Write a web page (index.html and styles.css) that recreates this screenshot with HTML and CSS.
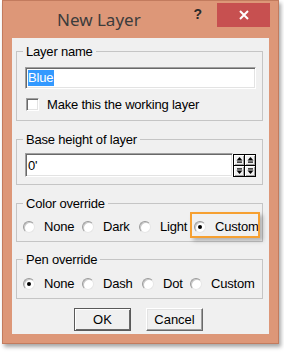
FILE: index.html
```html
<!DOCTYPE html>
<html>
<head>
<meta charset="utf-8">
<link rel="stylesheet" href="styles.css">
</head>
<body>
<div class="window">
  <div class="titlebar">
    <span class="title">New Layer</span>
    <span class="help">?</span>
    <span class="close"><svg width="10" height="10" viewBox="0 0 10 10"><path d="M1 1L9 9M9 1L1 9" stroke="#fff" stroke-width="2"/></svg></span>
  </div>
  <div class="client">
    <fieldset class="group g1">
      <legend>Layer name</legend>
      <div class="textbox"><span class="sel">Blue</span></div>
      <div class="check"><span class="box"></span><span>Make this the working layer</span></div>
    </fieldset>
    <fieldset class="group g2">
      <legend>Base height of layer</legend>
      <div class="spinrow">
        <div class="textbox tall">0'</div>
        <div class="spin">
          <span class="cell"><svg width="7" height="6" viewBox="0 0 7 6"><path d="M3.5 0L6.5 3.5H0.5Z" fill="#000"/><rect x="1" y="4.5" width="5" height="1.2" fill="#000"/></svg></span>
          <span class="cell"><svg width="7" height="6" viewBox="0 0 7 6"><path d="M3.5 0L6.5 3.5H0.5Z" fill="#000"/><rect x="1" y="4.5" width="5" height="1.2" fill="#000"/></svg></span>
          <span class="cell"><svg width="7" height="6" viewBox="0 0 7 6"><rect x="1" y="0.3" width="5" height="1.2" fill="#000"/><path d="M3.5 6L6.5 2.5H0.5Z" fill="#000"/></svg></span>
          <span class="cell"><svg width="7" height="6" viewBox="0 0 7 6"><rect x="1" y="0.3" width="5" height="1.2" fill="#000"/><path d="M3.5 6L6.5 2.5H0.5Z" fill="#000"/></svg></span>
        </div>
      </div>
    </fieldset>
    <fieldset class="group g3">
      <legend>Color override</legend>
      <div class="radios">
        <span class="radio"><i></i>None</span>
        <span class="radio"><i></i>Dark</span>
        <span class="radio"><i></i>Light</span>
        <span class="radio checked hl"><i></i>Custom</span>
      </div>
    </fieldset>
    <fieldset class="group g4">
      <legend>Pen override</legend>
      <div class="radios">
        <span class="radio checked"><i></i>None</span>
        <span class="radio"><i></i>Dash</span>
        <span class="radio"><i></i>Dot</span>
        <span class="radio"><i></i>Custom</span>
      </div>
    </fieldset>
    <div class="buttons">
      <span class="btn default">OK</span>
      <span class="btn">Cancel</span>
    </div>
  </div>
</div>
</body>
</html>
```
FILE: styles.css
```css
html, body {
  margin: 0;
  padding: 0;
  background: #ffffff;
}
body {
  width: 284px;
  height: 352px;
  font-family: "Liberation Sans", Arial, sans-serif;
  font-size: 13px;
  letter-spacing: -0.2px;
  color: #000;
}
.window {
  margin-left: 2px;
  width: 277px;
  height: 344px;
  box-sizing: border-box;
  background: #dd9778;
  border: 1px solid #c27b5e;
  padding: 0 9px 9px 9px;
  display: flex;
  flex-direction: column;
  box-shadow: 2px 3px 4px rgba(0, 0, 0, 0.35);
}
.titlebar {
  height: 37px;
  display: flex;
  align-items: flex-start;
}
.title {
  font-family: "Noto Sans", "Liberation Sans", sans-serif;
  font-size: 17px;
  letter-spacing: 0;
  line-height: 20px;
  color: #3c3c3c;
  margin-left: 45px;
  padding-top: 9px;
  flex: 1;
}
.help {
  font-weight: bold;
  font-size: 14px;
  line-height: 14px;
  padding-top: 6px;
  color: #2a2a2a;
  margin-right: 15px;
  letter-spacing: 0;
}
.close {
  width: 53px;
  height: 24px;
  margin-top: 2px;
  margin-right: -1px;
  background: #c75050;
  display: flex;
  align-items: center;
  justify-content: center;
}
.client {
  flex: 1;
  background: #f0f0f0;
  padding: 0 6px 3px 4px;
  display: flex;
  flex-direction: column;
}
.group {
  margin: 0;
  min-width: 0;
  border: 1px solid #c5c5c5;
  padding: 0 6px 7px 6px;
}
.group legend {
  padding: 0 3px;
  line-height: 15px;
}
.g1 { margin-top: 6px; padding-top: 8px; padding-bottom: 8px; }
.g2 { margin-top: 11px; padding-top: 6px; }
.g3 { margin-top: 11px; padding-top: 8px; }
.g4 { margin-top: 10px; padding-top: 9px; }

.textbox {
  margin-left: 2px;
  height: 22px;
  box-sizing: border-box;
  background: #fff;
  border-top: 1px solid #a0a0a0;
  border-left: 1px solid #a0a0a0;
  border-right: 1px solid #fff;
  border-bottom: 1px solid #fff;
  box-shadow: inset 1px 1px 0 #696969, inset -1px -1px 0 #e3e3e3;
  padding: 2px 0 0 2px;
  line-height: 16px;
}
.sel {
  display: inline-block;
  background: #3399ff;
  color: #fff;
  line-height: 16px;
  padding: 0 1px 0 0;
}
.check {
  display: flex;
  align-items: center;
  height: 15px;
  margin-top: 8px;
  margin-left: 3px;
}
.box {
  width: 13px;
  height: 13px;
  box-sizing: border-box;
  background: #fff;
  border-top: 1px solid #a0a0a0;
  border-left: 1px solid #a0a0a0;
  border-right: 1px solid #fff;
  border-bottom: 1px solid #fff;
  box-shadow: inset 1px 1px 0 #696969, inset -1px -1px 0 #e3e3e3;
  margin-right: 8px;
}
.spinrow {
  display: flex;
  height: 24px;
}
.spinrow .textbox {
  flex: 1;
  height: 24px;
  padding-top: 4px;
}
.spin {
  width: 23px;
  height: 23px;
  margin-top: 1px;
  box-sizing: border-box;
  border: 1px solid #000;
  background: #000;
  display: grid;
  grid-template-columns: 1fr 1fr;
  grid-template-rows: 1fr 1fr;
  gap: 1px;
}
.cell {
  background: #f0f0f0;
  box-shadow: inset 1px 1px 0 #fff, inset -1px -1px 0 #a0a0a0;
  display: flex;
  align-items: center;
  justify-content: center;
}
.radios {
  display: grid;
  height: 15px;
  align-items: center;
  line-height: 15px;
}
.g3 .radios { grid-template-columns: 59px 57px 55px auto; }
.g4 .radios { grid-template-columns: 59px 60px 48px auto; }
.radio {
  display: flex;
  align-items: center;
  position: relative;
}
.radio i {
  width: 12px;
  height: 12px;
  box-sizing: border-box;
  border-radius: 50%;
  background: #fff;
  border: 1px solid;
  border-color: #9a9a9a #e6e6e6 #e6e6e6 #9a9a9a;
  box-shadow: inset 1px 1px 0 #c8c8c8;
  margin-right: 9px;
  display: flex;
  align-items: center;
  justify-content: center;
}
.radio.checked i::after {
  content: "";
  width: 4px;
  height: 4px;
  border-radius: 50%;
  background: #000;
}
.hl::after {
  content: "";
  position: absolute;
  left: -4px;
  top: -7px;
  width: 70px;
  height: 26px;
  box-sizing: border-box;
  border: 2px solid #f6a031;
  box-shadow: 3px 3px 4px rgba(0, 0, 0, 0.25);
}
.buttons {
  margin-top: 9px;
  display: flex;
  justify-content: center;
  gap: 15px;
  padding-right: 2px;
}
.btn {
  width: 57px;
  height: 23px;
  box-sizing: border-box;
  background: #f0f0f0;
  border: 1px solid;
  border-color: #fff #696969 #696969 #fff;
  box-shadow: inset -1px -1px 0 #a0a0a0, inset 1px 1px 0 #e3e3e3;
  display: flex;
  align-items: center;
  justify-content: center;
  letter-spacing: 0;
}
.btn.default {
  border-color: #5a5a5a;
  box-shadow: inset 1px 1px 0 #fff, inset -1px -1px 0 #696969;
}
```
